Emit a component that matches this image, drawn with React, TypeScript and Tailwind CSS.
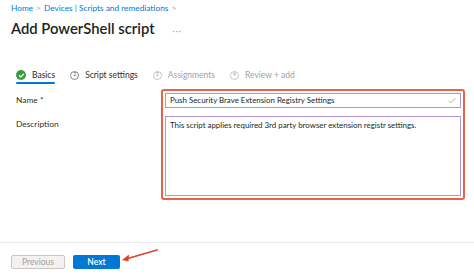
import React from 'react';

const steps = [
  { n: '2', label: 'Script settings', active: true },
  { n: '3', label: 'Assignments', active: false },
  { n: '4', label: 'Review + add', active: false },
];

export default function App() {
  return (
    <div className="relative w-[474px] h-[276px] bg-white flex flex-col text-[#323130] overflow-hidden" style={{ fontFamily: 'Lato, "Open Sans", sans-serif' }}>
      {/* Breadcrumb */}
      <div className="flex items-center gap-[3px] pl-[11px] pt-[2px] h-[15px] text-[8.3px] text-[#0078d4]">
        <span>Home</span>
        <span className="text-[#a19f9d]">&gt;</span>
        <span>Devices | Scripts and remediations</span>
        <span className="text-[#a19f9d]">&gt;</span>
      </div>

      {/* Title */}
      <div className="flex items-center pl-[11px] h-[27px]">
        <h1 className="text-[14.8px] font-semibold text-[#201f1e]">Add PowerShell script</h1>
        <span className="ml-[18px] mt-[4px] text-[8px] text-[#8a8886] tracking-[1px]">···</span>
      </div>

      {/* Steps */}
      <div className="flex items-center pl-[16px] mt-[26px] h-[14px] text-[8.5px]">
        <div className="relative flex items-center gap-[6px]">
          <span className="w-[10px] h-[10px] rounded-full bg-[#3c9b3c] flex items-center justify-center">
            <svg width="7" height="7" viewBox="0 0 10 10">
              <path d="M2 5.2l2 2L8 3" stroke="white" strokeWidth="1.8" fill="none" strokeLinecap="round" strokeLinejoin="round" />
            </svg>
          </span>
          <span className="text-[#201f1e]">Basics</span>
          <span className="absolute left-0 right-0 top-[13px] h-[2px] bg-[#0078d4] rounded-full" />
        </div>
        {steps.map((s) => (
          <div key={s.n} className="flex items-center gap-[6px] ml-[15px]">
            <span className={`w-[9px] h-[9px] rounded-full border flex items-center justify-center text-[5px] ${s.active ? 'border-[#8a8886] text-[#605e5c]' : 'border-[#c8c6c4] text-[#a19f9d]'}`}>{s.n}</span>
            <span className={s.active ? 'text-[#323130]' : 'text-[#a19f9d]'}>{s.label}</span>
          </div>
        ))}
      </div>

      {/* Form */}
      <div className="flex mt-[7px] text-[7.9px]">
        <div className="w-[161px] pl-[16px] flex flex-col text-[8.4px]">
          <span className="mt-[5px]">Name *</span>
          <span className="mt-[11px]">Description</span>
        </div>
        <div className="w-[304px] h-[111px] border-2 border-[#e8614a] rounded-[3px] p-[2px] flex flex-col gap-[8px]">
          <div className="h-[15px] border border-[#b393d3] flex items-center justify-between px-[4px]">
            <span className="text-[#201f1e]">Push Security Brave Extension Registry Settings</span>
            <svg width="8" height="7" viewBox="0 0 10 8">
              <path d="M1 4.2l2.6 2.6L9 1.2" stroke="#6bb36b" strokeWidth="1" fill="none" />
            </svg>
          </div>
          <div className="flex-1 border border-[#b393d3] px-[4px] pt-[3px]">
            <span className="text-[#201f1e]">This script applies required 3rd party browser extension registr settings.</span>
          </div>
        </div>
      </div>

      <div className="flex-1" />

      {/* Footer */}
      <div className="border-t border-[#edebe9] h-[34px] flex items-start pt-[12px] pl-[11px] gap-[8px] text-[8.5px]">
        <button className="w-[54px] h-[14px] bg-[#f3f2f1] border border-[#c8c6c4] text-[#a19f9d] rounded-[2px] flex items-center justify-center">Previous</button>
        <button className="w-[47px] h-[14px] bg-[#0078d4] text-white font-semibold rounded-[2px] flex items-center justify-center">Next</button>
      </div>

      {/* Annotation arrow */}
      <svg className="absolute left-[118px] top-[246px]" width="42" height="18" viewBox="0 0 42 18">
        <path d="M39 4L8 13" stroke="#e0442d" strokeWidth="1.8" strokeLinecap="round" />
        <path d="M4 14l7-5.5-0.5 7z" fill="#e0442d" />
      </svg>
    </div>
  );
}
